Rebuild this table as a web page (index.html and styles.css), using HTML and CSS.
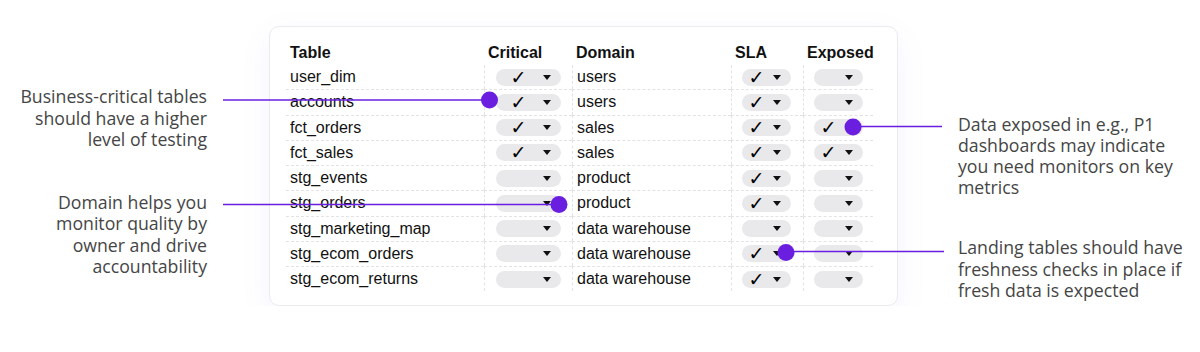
FILE: index.html
```html
<!DOCTYPE html>
<html lang="en">
<head>
    <meta charset="UTF-8">
    <meta name="viewport" content="width=device-width, initial-scale=1.0">
    <title>Table tagging</title>
    <link rel="stylesheet" href="styles.css">
</head>
<body>
    <div class="figure">
        <div class="notes notes-left">
            <p class="note note-critical">Business-critical tables<br>should have a higher<br>level of testing</p>
            <p class="note note-domain">Domain helps you<br>monitor quality by<br>owner and drive<br>accountability</p>
        </div>

        <div class="card">
            <table class="tags">
                <thead>
                    <tr>
                        <th class="col-table">Table</th>
                        <th class="col-critical">Critical</th>
                        <th class="col-domain">Domain</th>
                        <th class="col-sla">SLA</th>
                        <th class="col-exposed">Exposed</th>
                    </tr>
                </thead>
                <tbody id="rows"></tbody>
            </table>
        </div>

        <div class="notes notes-right">
            <p class="note note-exposed">Data exposed in e.g., P1<br>dashboards may indicate<br>you need monitors on key<br>metrics</p>
            <p class="note note-landing">Landing tables should have<br>freshness checks in place if<br>fresh data is expected</p>
        </div>

        <!-- callout lines drawn over the table -->
        <svg class="callouts" width="1200" height="300" viewBox="0 0 1200 300">
            <line x1="223" y1="74" x2="489" y2="74" />
            <circle cx="489.5" cy="74" r="8.5" />
            <line x1="223" y1="178.5" x2="559" y2="178.5" />
            <circle cx="559" cy="178.5" r="8.5" />
            <line x1="853" y1="100.5" x2="942" y2="100.5" />
            <circle cx="853" cy="101" r="8.5" />
            <line x1="786" y1="225.5" x2="944" y2="225.5" />
            <circle cx="786" cy="226.5" r="8.5" />
        </svg>
    </div>

    <script>
        const tables = [
            { name: 'user_dim', critical: true, domain: 'users', sla: true, exposed: false },
            { name: 'accounts', critical: true, domain: 'users', sla: true, exposed: false },
            { name: 'fct_orders', critical: true, domain: 'sales', sla: true, exposed: true },
            { name: 'fct_sales', critical: true, domain: 'sales', sla: true, exposed: true },
            { name: 'stg_events', critical: false, domain: 'product', sla: true, exposed: false },
            { name: 'stg_orders', critical: false, domain: 'product', sla: true, exposed: false },
            { name: 'stg_marketing_map', critical: false, domain: 'data warehouse', sla: false, exposed: false },
            { name: 'stg_ecom_orders', critical: false, domain: 'data warehouse', sla: true, exposed: false },
            { name: 'stg_ecom_returns', critical: false, domain: 'data warehouse', sla: true, exposed: false }
        ];

        function pill(checked, wide) {
            return `<div class="pill ${wide ? 'pill-wide' : ''}">` +
                `<span class="check">${checked ? '✓' : ''}</span>` +
                `<span class="caret"></span></div>`;
        }

        function renderRows() {
            const body = document.getElementById('rows');
            body.innerHTML = tables.map(t => `
                <tr>
                    <td>${t.name}</td>
                    <td class="sep">${pill(t.critical, true)}</td>
                    <td class="sep">${t.domain}</td>
                    <td class="sep">${pill(t.sla)}</td>
                    <td class="sep">${pill(t.exposed)}</td>
                </tr>`).join('');
        }

        renderRows();
    </script>
</body>
</html>
```

FILE: styles.css
```css
body {
    margin: 0;
    padding-top: 26px;
    background: #fff;
    font-family: "Liberation Sans", Arial, sans-serif;
}
.figure {
    position: relative;
    display: grid;
    grid-template-columns: 207px 629px 1fr;
    column-gap: 62px;
    align-items: start;
}
.notes {
    display: flex;
    flex-direction: column;
}
.note {
    margin: 0;
    font-family: "Open Sans", sans-serif;
    font-size: 17.7px;
    line-height: 21.5px;
    color: #454545;
    white-space: nowrap;
}
.notes-left {
    text-align: right;
}
.note-critical {
    margin-top: 60px;
}
.note-domain {
    margin-top: 41px;
}
.notes-right {
    margin-left: -2px;
}
.note-exposed {
    margin-top: 88px;
    line-height: 21px;
}
.note-landing {
    margin-top: 39px;
}
.card {
    border: 1px solid #ebebef;
    border-radius: 10px;
    padding: 13px 24px 14px 16px;
    background: #fff;
    box-shadow: 0 10px 32px rgba(110, 70, 220, 0.07);
}
.tags {
    border-collapse: separate;
    border-spacing: 0;
    width: 587px;
    table-layout: fixed;
    font-size: 16px;
    color: #111;
}
.tags th {
    text-align: left;
    font-weight: bold;
    line-height: 25px;
    padding: 0 0 0 4px;
}
.col-table { width: 194px; }
.col-critical { width: 84px; }
.col-domain { width: 155px; }
.col-sla { width: 68px; }
.col-exposed { width: 66px; }
.tags td {
    padding: 0 0 0 4px;
    line-height: 24.25px;
    height: 24.25px;
    white-space: nowrap;
    border-top: 1px dashed #e3e3e7;
}
.tags tbody tr:first-child td {
    border-top: none;
}
.tags td.sep {
    border-left: 1px dashed #e3e3e7;
}
.pill {
    display: flex;
    align-items: center;
    width: 49px;
    height: 17px;
    margin: 0 auto 0 6px;
    border-radius: 9px;
    background: #e9e9ec;
}
.pill-wide {
    width: 65px;
    margin-left: 7px;
}
.check {
    flex: 1;
    text-align: center;
    font-family: "DejaVu Sans", sans-serif;
    font-size: 19px;
    font-weight: bold;
    line-height: 17px;
    color: #000;
}
.caret {
    width: 0;
    height: 0;
    margin: 0 10px 0 2px;
    border-left: 4.5px solid transparent;
    border-right: 4.5px solid transparent;
    border-top: 5px solid #111;
}
.callouts {
    position: absolute;
    left: 0;
    top: 0;
    overflow: visible;
    pointer-events: none;
}
.callouts line {
    stroke: #6a1fe0;
    stroke-width: 1.5;
}
.callouts circle {
    fill: #6a1fe0;
}
```
